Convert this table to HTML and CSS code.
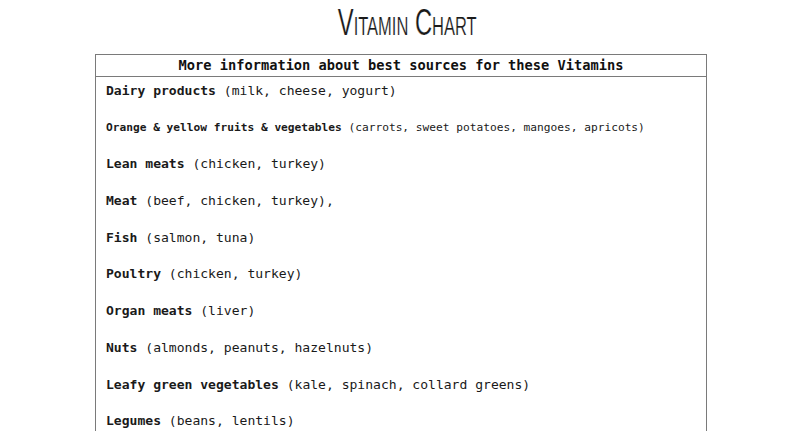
FILE: index.html
```html
<!DOCTYPE html>
<html>
<head>
<meta charset="utf-8">
<link rel="stylesheet" href="styles.css">
</head>
<body>
<div class="page">
  <h1 class="title"><span class="title-text">Vitamin Chart</span></h1>
  <div class="chart">
    <div class="chart-head">More information about best sources for these Vitamins</div>
    <div class="chart-body">
      <p class="src"><b>Dairy products</b> (milk, cheese, yogurt)</p>
      <p class="src small"><b>Orange &amp; yellow fruits &amp; vegetables</b> (carrots, sweet potatoes, mangoes, apricots)</p>
      <p class="src"><b>Lean meats</b> (chicken, turkey)</p>
      <p class="src"><b>Meat</b> (beef, chicken, turkey),</p>
      <p class="src"><b>Fish</b> (salmon, tuna)</p>
      <p class="src"><b>Poultry</b> (chicken, turkey)</p>
      <p class="src"><b>Organ meats</b> (liver)</p>
      <p class="src"><b>Nuts</b> (almonds, peanuts, hazelnuts)</p>
      <p class="src"><b>Leafy green vegetables</b> (kale, spinach, collard greens)</p>
      <p class="src"><b>Legumes</b> (beans, lentils)</p>
    </div>
  </div>
</div>
</body>
</html>
```

FILE: styles.css
```css
html, body {
  margin: 0;
  padding: 0;
  background: #ffffff;
}

.page {
  padding-left: 95px;
  width: 612px;
  color: #111;
}

.title {
  margin: 0;
  height: 54px;
  display: flex;
  justify-content: center;
  align-items: flex-start;
  padding-left: 12px;
  box-sizing: border-box;
}

.title-text {
  display: inline-block;
  font-family: "Liberation Sans Narrow", "Liberation Sans", sans-serif;
  font-weight: normal;
  font-variant: small-caps;
  font-size: 36px;
  line-height: 46px;
  transform: scaleX(0.66);
  color: #1a1a1a;
  -webkit-text-stroke: 0.2px #fff;
}

.chart {
  border: 1px solid #7a7a7a;
  border-bottom: none;
  padding-bottom: 40px;
  font-family: "DejaVu Sans Mono", "Liberation Mono", monospace;
}

.chart-head {
  height: 21px;
  line-height: 21px;
  text-align: center;
  font-weight: bold;
  font-size: 13.7px;
  border-bottom: 1px solid #7a7a7a;
}

.chart-body {
  padding: 6px 0 0 10px;
}

.src {
  margin: 0 0 20.7px 0;
  font-size: 13.05px;
  line-height: 16px;
  white-space: nowrap;
  color: #1a1a1a;
}

.src.small {
  font-size: 11.2px;
}
```
